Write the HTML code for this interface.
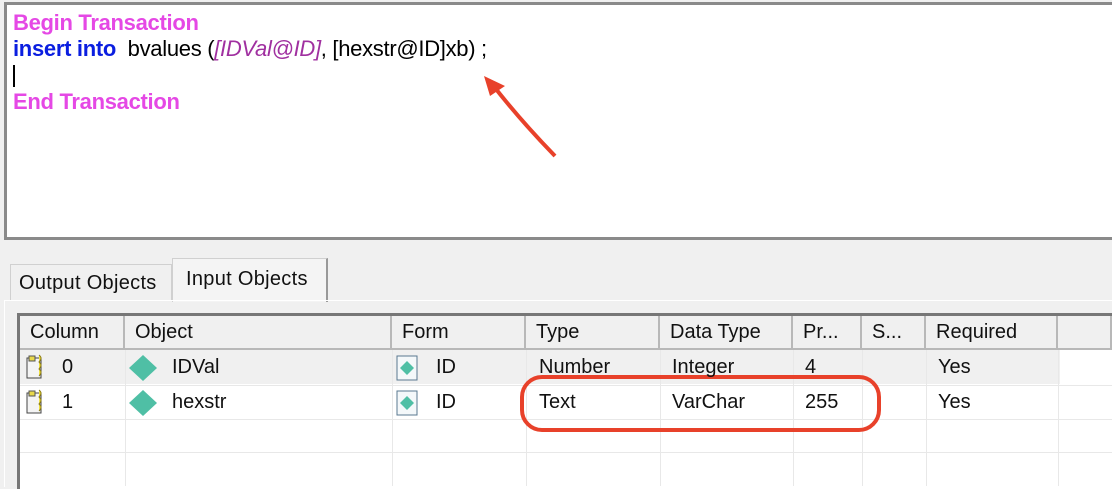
<!DOCTYPE html>
<html><head><style>
body{margin:0;width:1112px;height:486px;background:#f0f0f0;position:relative;overflow:hidden;font-family:"Liberation Sans",sans-serif;}
.ed{position:absolute;left:4px;top:2px;width:1112px;height:238px;border:3px solid #8a8a8a;border-right:none;background:#fff;box-sizing:border-box}
.ed div{position:absolute;left:6px;font-size:22px;white-space:pre;letter-spacing:-0.3px}
.kw{color:#e548e5;font-weight:bold;letter-spacing:0.7px}
.bl{color:#0a1ee0;font-weight:bold}
.tab{position:absolute;font-size:20px;color:#111;box-sizing:border-box;border:1px solid #d0d0d0;border-bottom:none;letter-spacing:0.3px}
.a{position:absolute;font-size:20px;color:#111;white-space:nowrap}
.h{position:absolute;top:316px;height:34px;background:#f0f0f0;border-right:2px solid #b8b8b8;border-bottom:2px solid #b8b8b8;box-sizing:border-box;font-size:20px;color:#111;padding:5px 0 0 10px}
.vl{position:absolute;top:350px;height:136px;width:1px;background:#e8e8e8}
.hl{position:absolute;left:20px;width:1092px;height:1px;background:#e8e8e8}
</style></head><body>
<div class="ed">
<div class="kw" style="top:5px">Begin Transaction</div>
<div style="top:31px"><span class="bl">insert into</span>  bvalues (<i style="color:#a030a0">[IDVal@ID]</i>, [hexstr@ID]xb) ;</div>
<div style="top:60px;width:2px;height:22px;background:#000;left:6px"></div>
<div class="kw" style="top:84px">End Transaction</div>
</div>
<div class="tab" style="left:10px;top:264px;width:162px;height:36px;padding:7px 0 0 8px;background:#f0f0f0">Output Objects</div>
<div class="tab" style="left:172px;top:258px;width:156px;height:44px;padding:9px 0 0 13px;background:#f4f4f4;border-right:2px solid #999">Input Objects</div>
<div style="position:absolute;left:4px;top:300px;width:1108px;height:186px;border-top:1px solid #fff;border-left:1px solid #fff"></div>
<div style="position:absolute;left:17px;top:313px;width:1095px;height:173px;border:3px solid #777;border-right:none;border-bottom:none;background:#fff"></div>
<div style="position:absolute;left:20px;top:350px;width:1040px;height:34px;background:#f0f0f0"></div>
<div class="h" style="left:20px;width:105px">Column</div>
<div class="h" style="left:125px;width:267px">Object</div>
<div class="h" style="left:392px;width:134px">Form</div>
<div class="h" style="left:526px;width:134px">Type</div>
<div class="h" style="left:660px;width:133px">Data Type</div>
<div class="h" style="left:793px;width:69px">Pr...</div>
<div class="h" style="left:862px;width:64px">S...</div>
<div class="h" style="left:926px;width:132px">Required</div>
<div class="h" style="left:1058px;width:54px"></div>
<div class="vl" style="left:125px"></div><div class="vl" style="left:392px"></div><div class="vl" style="left:526px"></div><div class="vl" style="left:660px"></div><div class="vl" style="left:793px"></div><div class="vl" style="left:862px"></div><div class="vl" style="left:926px"></div><div class="vl" style="left:1058px"></div>
<div class="hl" style="top:385px"></div><div class="hl" style="top:419px"></div><div class="hl" style="top:452px"></div>
<svg style="position:absolute;left:0;top:0" width="1112" height="486">
<g id="r">
<rect x="27" y="358" width="14" height="20" fill="#f4f4f4" stroke="#444"/><rect x="29" y="356" width="6" height="5" fill="#e8d84a" stroke="#555"/>
<path d="M39 355 q4 3 0 7 q4 3 0 7 q4 3 0 7" fill="#f0e040" stroke="#8a7a10"/>
<polygon points="143,355 157,368 143,381 129,368" fill="#4fbfa5"/>
<rect x="397" y="356" width="20" height="24" fill="#f4f8fa" stroke="#5a7890"/><polygon points="407,361 414,368 407,375 400,368" fill="#4fbfa5"/>
</g>
<use href="#r" y="35"/>
<path d="M555 156 Q520 120 492 84" stroke="#e8412a" stroke-width="4" fill="none"/>
<polygon points="484,76 505,86 490,96" fill="#e8412a"/>
<rect x="522" y="377" width="357" height="53" rx="20" fill="none" stroke="#e8412a" stroke-width="4"/>
</svg>
<div class="a" style="left:62px;top:356px">0</div><div class="a" style="left:172px;top:356px">IDVal</div><div class="a" style="left:436px;top:356px">ID</div><div class="a" style="left:539px;top:356px">Number</div><div class="a" style="left:672px;top:356px">Integer</div><div class="a" style="left:805px;top:356px">4</div><div class="a" style="left:938px;top:356px">Yes</div>
<div class="a" style="left:62px;top:391px">1</div><div class="a" style="left:172px;top:391px">hexstr</div><div class="a" style="left:436px;top:391px">ID</div><div class="a" style="left:539px;top:391px">Text</div><div class="a" style="left:672px;top:391px">VarChar</div><div class="a" style="left:805px;top:391px">255</div><div class="a" style="left:938px;top:391px">Yes</div>
</body></html>
